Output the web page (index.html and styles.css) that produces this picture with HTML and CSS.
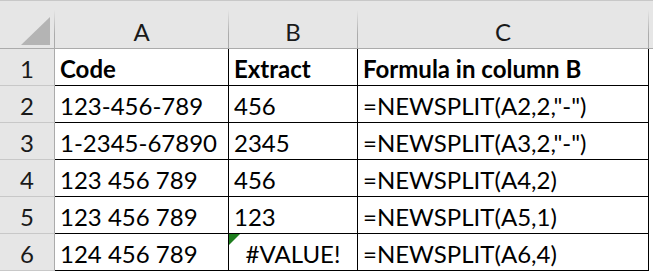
FILE: index.html
```html
<!DOCTYPE html>
<html>
<head>
<meta charset="utf-8">
<link rel="stylesheet" href="styles.css">
</head>
<body>
<div class="sheet">
  <div class="hdr-row">
    <div class="corner"><span class="tri"></span></div>
    <div class="colhdr col-a">A</div>
    <div class="colhdr col-b">B</div>
    <div class="colhdr col-c">C</div>
    <div class="colhdr rest"></div>
  </div>

  <div class="row">
    <div class="rowhdr">1</div>
    <div class="cell col-a bold">Code</div>
    <div class="cell col-b bold">Extract</div>
    <div class="cell col-c bold">Formula in column B</div>
  </div>
  <div class="row">
    <div class="rowhdr">2</div>
    <div class="cell col-a">123-456-789</div>
    <div class="cell col-b">456</div>
    <div class="cell col-c">=NEWSPLIT(A2,2,"-")</div>
  </div>
  <div class="row">
    <div class="rowhdr">3</div>
    <div class="cell col-a">1-2345-67890</div>
    <div class="cell col-b">2345</div>
    <div class="cell col-c">=NEWSPLIT(A3,2,"-")</div>
  </div>
  <div class="row">
    <div class="rowhdr">4</div>
    <div class="cell col-a">123 456 789</div>
    <div class="cell col-b">456</div>
    <div class="cell col-c">=NEWSPLIT(A4,2)</div>
  </div>
  <div class="row">
    <div class="rowhdr">5</div>
    <div class="cell col-a">123 456 789</div>
    <div class="cell col-b">123</div>
    <div class="cell col-c">=NEWSPLIT(A5,1)</div>
  </div>
  <div class="row">
    <div class="rowhdr">6</div>
    <div class="cell col-a">124 456 789</div>
    <div class="cell col-b error"><span class="flag"></span>#VALUE!</div>
    <div class="cell col-c">=NEWSPLIT(A6,4)</div>
  </div>
</div>
</body>
</html>
```

FILE: styles.css
```css
* { box-sizing: border-box; }

html, body {
  margin: 0;
  padding: 0;
  background: #ffffff;
}

body {
  width: 653px;
  height: 274px;
  overflow: hidden;
  font-family: "Lato", "Liberation Sans", sans-serif;
  font-size: 24px;
  color: #000;
}

.sheet {
  display: flex;
  flex-direction: column;
  width: 653px;
}

.hdr-row {
  display: flex;
  height: 49px;
  background: #e6e6e6;
  border-top: 1px solid #c8c8c8;
  border-bottom: 1px solid #ababab;
}

.corner {
  width: 55px;
  flex: none;
  display: flex;
  justify-content: flex-end;
  align-items: flex-end;
  padding: 0 4px 3px 0;
  border-right: 1px solid;
  border-image: linear-gradient(to bottom, rgba(171,171,171,0) 20%, #ababab 70%) 1;
}

.tri {
  width: 29px;
  height: 28px;
  background: #b4b4b4;
  clip-path: polygon(100% 0, 100% 100%, 0 100%);
}

.colhdr {
  flex: none;
  display: flex;
  align-items: flex-end;
  justify-content: center;
  line-height: 28px;
  padding-bottom: 2px;
  color: #1a1a1a;
  border-right: 1px solid;
  border-image: linear-gradient(to bottom, rgba(171,171,171,0) 20%, #ababab 70%) 1;
}

.colhdr.rest {
  flex: 1;
  border: none;
}

.col-a { width: 174px; }
.col-b { width: 129px; }
.col-c { width: 291px; }

.row {
  display: flex;
  height: 37px;
}

.rowhdr {
  width: 55px;
  flex: none;
  background: #e6e6e6;
  border-right: 1px solid #ababab;
  border-bottom: 1px solid #c8c8c8;
  display: flex;
  align-items: flex-end;
  justify-content: center;
  line-height: 28px;
  padding-bottom: 2px;
  color: #1a1a1a;
}

.cell {
  flex: none;
  display: flex;
  align-items: flex-end;
  line-height: 28px;
  padding: 0 0 2px 5px;
  border-right: 1px solid #000;
  border-bottom: 1px solid #000;
  white-space: nowrap;
  overflow: hidden;
}

.bold { font-weight: 700; }

.error {
  position: relative;
  justify-content: center;
  padding-left: 0;
}

.flag {
  position: absolute;
  left: 0;
  top: 0;
  width: 11px;
  height: 11px;
  background: #1e7d1e;
  clip-path: polygon(0 0, 100% 0, 0 100%);
}
```
